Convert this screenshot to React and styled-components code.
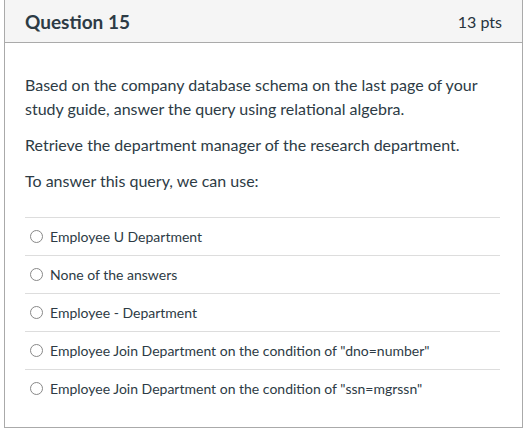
import React from "react";
import styled, { createGlobalStyle } from "styled-components";

const GlobalStyle = createGlobalStyle`
  html, body {
    margin: 0;
    padding: 0;
    background: #ffffff;
  }
  body {
    font-family: Lato, "Noto Sans", sans-serif;
    color: #2d3b45;
  }
`;

const answers = [
  "Employee U Department",
  "None of the answers",
  "Employee - Department",
  'Employee Join Department on the condition of "dno=number"',
  'Employee Join Department on the condition of "ssn=mgrssn"',
];

const App = () => {
  return (
    <>
      <GlobalStyle />
      <Card>
        <Header>
          <Title>Question 15</Title>
          <Points>13 pts</Points>
        </Header>
        <Body>
          <Text>
            Based on the company database schema on the last page of your
            study guide, answer the query using relational algebra.
          </Text>
          <Text>Retrieve the department manager of the research department.</Text>
          <Text>To answer this query, we can use:</Text>
          <Answers>
            {answers.map((a) => (
              <Answer key={a}>
                <Radio type="radio" name="q15" />
                <AnswerLabel>{a}</AnswerLabel>
              </Answer>
            ))}
          </Answers>
        </Body>
      </Card>
    </>
  );
};

const Card = styled.section`
  width: 519px;
  margin: -1px 0 0 4px;
  border: 1px solid #aaaaaa;
  border-top-color: transparent;
  box-sizing: border-box;
  background: #ffffff;
`;

const Header = styled.div`
  height: 43px;
  box-sizing: border-box;
  background: #f5f5f5;
  border-bottom: 1px solid #aaaaaa;
  display: flex;
  align-items: center;
  justify-content: space-between;
  padding: 0 20px 0 20px;
`;

const Title = styled.h2`
  margin: 0;
  font-size: 19px;
  font-weight: 700;
  color: #2d3b45;
`;

const Points = styled.span`
  font-size: 16px;
  font-weight: 400;
  color: #26333c;
`;

const Body = styled.div`
  padding: 30px 22px 20px 20px;
`;

const Text = styled.p`
  margin: 0 0 12px;
  font-size: 16px;
  line-height: 24px;
`;

const Answers = styled.div`
  margin-top: 24px;
  border-top: 1px solid #dddddd;
`;

const Answer = styled.label`
  display: flex;
  align-items: center;
  height: 37px;
  padding-left: 5px;
  border-bottom: 1px solid #dddddd;
  &:last-child {
    border-bottom: none;
  }
`;

const Radio = styled.input`
  appearance: none;
  width: 13px;
  height: 13px;
  margin: 0 7px 0 0;
  border: 1px solid #888888;
  border-radius: 50%;
  background: #ffffff;
  box-sizing: border-box;
`;

const AnswerLabel = styled.span`
  font-size: 14px;
  color: #2d3b45;
`;

export default App;
